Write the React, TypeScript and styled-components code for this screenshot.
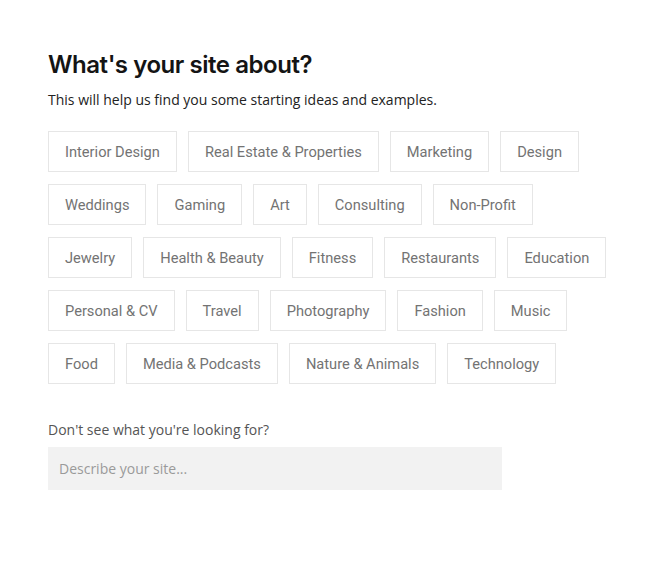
import React from "react";
import styled, { createGlobalStyle } from "styled-components";

const GlobalStyle = createGlobalStyle`
  html, body { margin: 0; padding: 0; background: #ffffff; }
  body { font-family: "Open Sans", "Liberation Sans", sans-serif; }
  * { box-sizing: border-box; }
`;

const Page = styled.div`
  padding: 48px 48px 0 48px;
  display: flex;
  flex-direction: column;
`;

const Title = styled.h1`
  margin: 0;
  font-family: Inter, "Liberation Sans", sans-serif;
  font-size: 24px;
  font-weight: 600;
  color: #141414;
  line-height: 34px;
  letter-spacing: -0.45px;
`;

const Subtitle = styled.p`
  margin: 8px 0 0 0;
  font-size: 14px;
  color: #222222;
  line-height: 20px;
`;

const ChipGrid = styled.div`
  margin-top: 21px;
  display: flex;
  flex-direction: column;
  gap: 12px;
`;

const ChipRow = styled.div`
  display: flex;
  gap: 11px;
`;

const Chip = styled.button`
  height: 41px;
  padding: 0 16px;
  border: 1px solid #e6e6e6;
  background: #ffffff;
  color: #737373;
  font-family: Roboto, "Liberation Sans", sans-serif;
  font-size: 14.65px;
  white-space: nowrap;
  cursor: pointer;
`;

const Label = styled.div`
  margin-top: 36px;
  font-size: 14px;
  color: #555555;
  line-height: 20px;
`;

const Input = styled.input`
  margin-top: 7px;
  width: 454px;
  height: 43px;
  border: none;
  background: #f2f2f2;
  padding: 0 11px;
  font-family: "Open Sans", "Liberation Sans", sans-serif;
  font-size: 14px;
  color: #333;
  outline: none;
  &::placeholder { color: #9a9a9a; }
`;

const rows: string[][] = [
  ["Interior Design", "Real Estate & Properties", "Marketing", "Design"],
  ["Weddings", "Gaming", "Art", "Consulting", "Non-Profit"],
  ["Jewelry", "Health & Beauty", "Fitness", "Restaurants", "Education"],
  ["Personal & CV", "Travel", "Photography", "Fashion", "Music"],
  ["Food", "Media & Podcasts", "Nature & Animals", "Technology"],
];

export default function App() {
  return (
    <>
      <GlobalStyle />
      <Page>
        <Title>What's your site about?</Title>
        <Subtitle>This will help us find you some starting ideas and examples.</Subtitle>
        <ChipGrid>
          {rows.map((row, i) => (
            <ChipRow key={i}>
              {row.map((c) => (
                <Chip key={c}>{c}</Chip>
              ))}
            </ChipRow>
          ))}
        </ChipGrid>
        <Label>Don't see what you're looking for?</Label>
        <Input placeholder="Describe your site..." />
      </Page>
    </>
  );
}
